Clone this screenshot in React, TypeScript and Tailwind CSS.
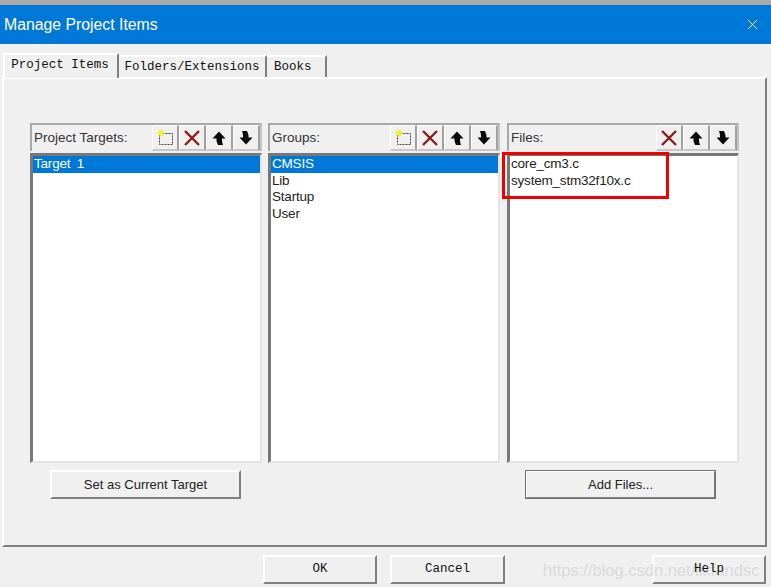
import React from "react";
import { X } from "lucide-react";

const sans = "font-['Liberation_Sans',Arial,sans-serif]";
const mono = "font-['Liberation_Mono','Courier_New',monospace]";

function NewIcon() {
  return (
    <svg width="20" height="20" viewBox="0 0 20 20">
      <rect x="4.500" y="5.500" width="13" height="11" fill="none" stroke="#444" strokeWidth="1" strokeDasharray="2 1" />
      <path d="M6 1.500v7M2.500 5h7M3.500 2.500l5 5M8.500 2.500l-5 5" stroke="#f0ec3c" strokeWidth="1.500" />
    </svg>
  );
}

function DeleteIcon() {
  return (
    <svg width="20" height="20" viewBox="0 0 20 20">
      <path d="M3 3l14 14M17 3L3 17" stroke="#8a1c1c" strokeWidth="2.400" />
    </svg>
  );
}

function UpIcon() {
  return (
    <svg width="18" height="18" viewBox="0 0 18 18">
      <path d="M9 2.500L15.500 9.500H12v2c0 1.500.5 3 1 4.500H8c-.5-1.500-1.500-3-1.500-5V9.500H2.500z" fill="#0a0a0a" />
    </svg>
  );
}

function DownIcon() {
  return (
    <svg width="18" height="18" viewBox="0 0 18 18">
      <path d="M9 15.500L2.500 8.500H6v-2c0-1.500-.5-3-1-4.500h5c.5 1.500 1.500 3 1.500 5v1.500h4z" fill="#0a0a0a" />
    </svg>
  );
}

function ToolButton({ children }: { children: React.ReactNode }) {
  return (
    <div className="w-[27px] h-[26px] flex items-center justify-center bg-[#f0f0f0] border-r-2 border-b-2 border-r-[#a0a0a0] border-b-[#c8c8c8] border-t border-l border-t-white border-l-white">
      {children}
    </div>
  );
}

function ListPanel({
  title,
  items,
  showNew = true,
  selected,
}: {
  title: string;
  items: string[];
  showNew?: boolean;
  selected?: string;
}) {
  return (
    <div className="w-[232px] flex flex-col gap-[2px]">
      <div className="h-[28px] flex items-center justify-between border-t-2 border-l-2 border-t-[#a8a8a8] border-l-[#a8a8a8] border-r-2 border-r-[#c4c4c4]">
        <span className={`${sans} text-[13.500px] text-[#333] pl-[2px]`}>{title}</span>
        <div className="flex">
          {showNew && (
            <ToolButton>
              <NewIcon />
            </ToolButton>
          )}
          <ToolButton>
            <DeleteIcon />
          </ToolButton>
          <ToolButton>
            <UpIcon />
          </ToolButton>
          <ToolButton>
            <DownIcon />
          </ToolButton>
        </div>
      </div>
      <div className="h-[310px] bg-white border-t-[3px] border-l-[3px] border-t-[#787878] border-l-[#787878] border-r-2 border-b-2 border-r-[#e4e4e4] border-b-[#e4e4e4]">
        {items.map((item) => (
          <div
            key={item}
            className={`${sans} h-[16.500px] leading-[16px] text-[13.500px] tracking-[-0.2px] [word-spacing:3px] pl-[1px] ${
              item === selected ? "bg-[#0078d7] text-white" : "text-[#222]"
            }`}
          >
            {item}
          </div>
        ))}
      </div>
    </div>
  );
}

function DialogButton({
  label,
  className,
  textClass,
}: {
  label: string;
  className: string;
  textClass: string;
}) {
  return (
    <div
      className={`flex items-center justify-center bg-[#f0f0f0] border-t-2 border-l-2 border-t-white border-l-white border-r-2 border-b-2 border-r-[#808080] border-b-[#808080] ${className} ${textClass}`}
    >
      <span className="relative z-10">{label}</span>
    </div>
  );
}

export default function App() {
  return (
    <div className="relative w-[771px] h-[587px] overflow-hidden bg-[#f0f0f0]">
      <div className="h-[5px] bg-[#a9a9a9]" />

      {/* title bar */}
      <div className="h-[39px] bg-[#0078d7] flex items-center justify-between pl-[4px] pr-[10px]">
        <span className={`${sans} text-[15.800px] text-white`}>Manage Project Items</span>
        <X size={17} strokeWidth={1.3} className="text-white" />
      </div>

      {/* tabs */}
      <div className={`${mono} flex items-end h-[33px] pl-[3px] text-[12.500px] text-[#111]`}>
        <div className="w-[116px] h-[25px] flex items-center justify-center pb-[3px] pr-[2px] border-t-2 border-l-2 border-t-white border-l-white border-r-2 border-r-[#808080] -mb-[1px] bg-[#f0f0f0] z-10">
          Project Items
        </div>
        <div className="w-[148px] h-[22px] flex items-center justify-center border-t-2 border-t-white border-r-2 border-r-[#808080]">
          Folders/Extensions
        </div>
        <div className="w-[60px] h-[22px] flex items-center pl-[7px] border-t-2 border-t-white border-r-2 border-r-[#808080]">
          Books
        </div>
      </div>

      {/* tab page */}
      <div className="h-[470px] ml-[2px] mr-[4px] border-t-2 border-l-2 border-t-white border-l-white border-r-2 border-b-2 border-r-[#808080] border-b-[#808080] pt-[44px] pl-[26px]">
        <div className="flex gap-[6px]">
          <ListPanel title="Project Targets:" items={["Target 1"]} selected="Target 1" />
          <ListPanel title="Groups:" items={["CMSIS", "Lib", "Startup", "User"]} selected="CMSIS" />
          <div className="ml-[1px]">
            <ListPanel title="Files:" items={["core_cm3.c", "system_stm32f10x.c"]} showNew={false} />
          </div>
        </div>
        <div className="flex mt-[7px]">
          <DialogButton
            label="Set as Current Target"
            className="ml-[20px] w-[191px] h-[29px]"
            textClass={`${sans} text-[13px] text-[#222]`}
          />
          <DialogButton
            label="Add Files..."
            className="ml-[284px] w-[191px] h-[29px] outline outline-1 outline-[#707070] -outline-offset-1"
            textClass={`${sans} text-[13px] text-[#222]`}
          />
        </div>
      </div>

      {/* bottom buttons */}
      <div className={`${mono} flex mt-[8px] pl-[263px] text-[12.500px] text-[#111]`}>
        <DialogButton label="OK" className="w-[114px] h-[29px]" textClass="" />
        <DialogButton label="Cancel" className="ml-[13px] w-[115px] h-[29px]" textClass="" />
        <DialogButton label="Help" className="ml-[147px] w-[114px] h-[29px]" textClass="" />
      </div>

      {/* red annotation box */}
      <div className="absolute left-[502px] top-[152px] w-[167px] h-[47px] border-[3px] border-[#f00000]" />

      {/* watermark */}
      <div className={`${sans} absolute left-[543px] top-[558px] text-[16.500px] text-[#dadada]`}>
        https://blog.csdn.net/likfandsc
      </div>
    </div>
  );
}
